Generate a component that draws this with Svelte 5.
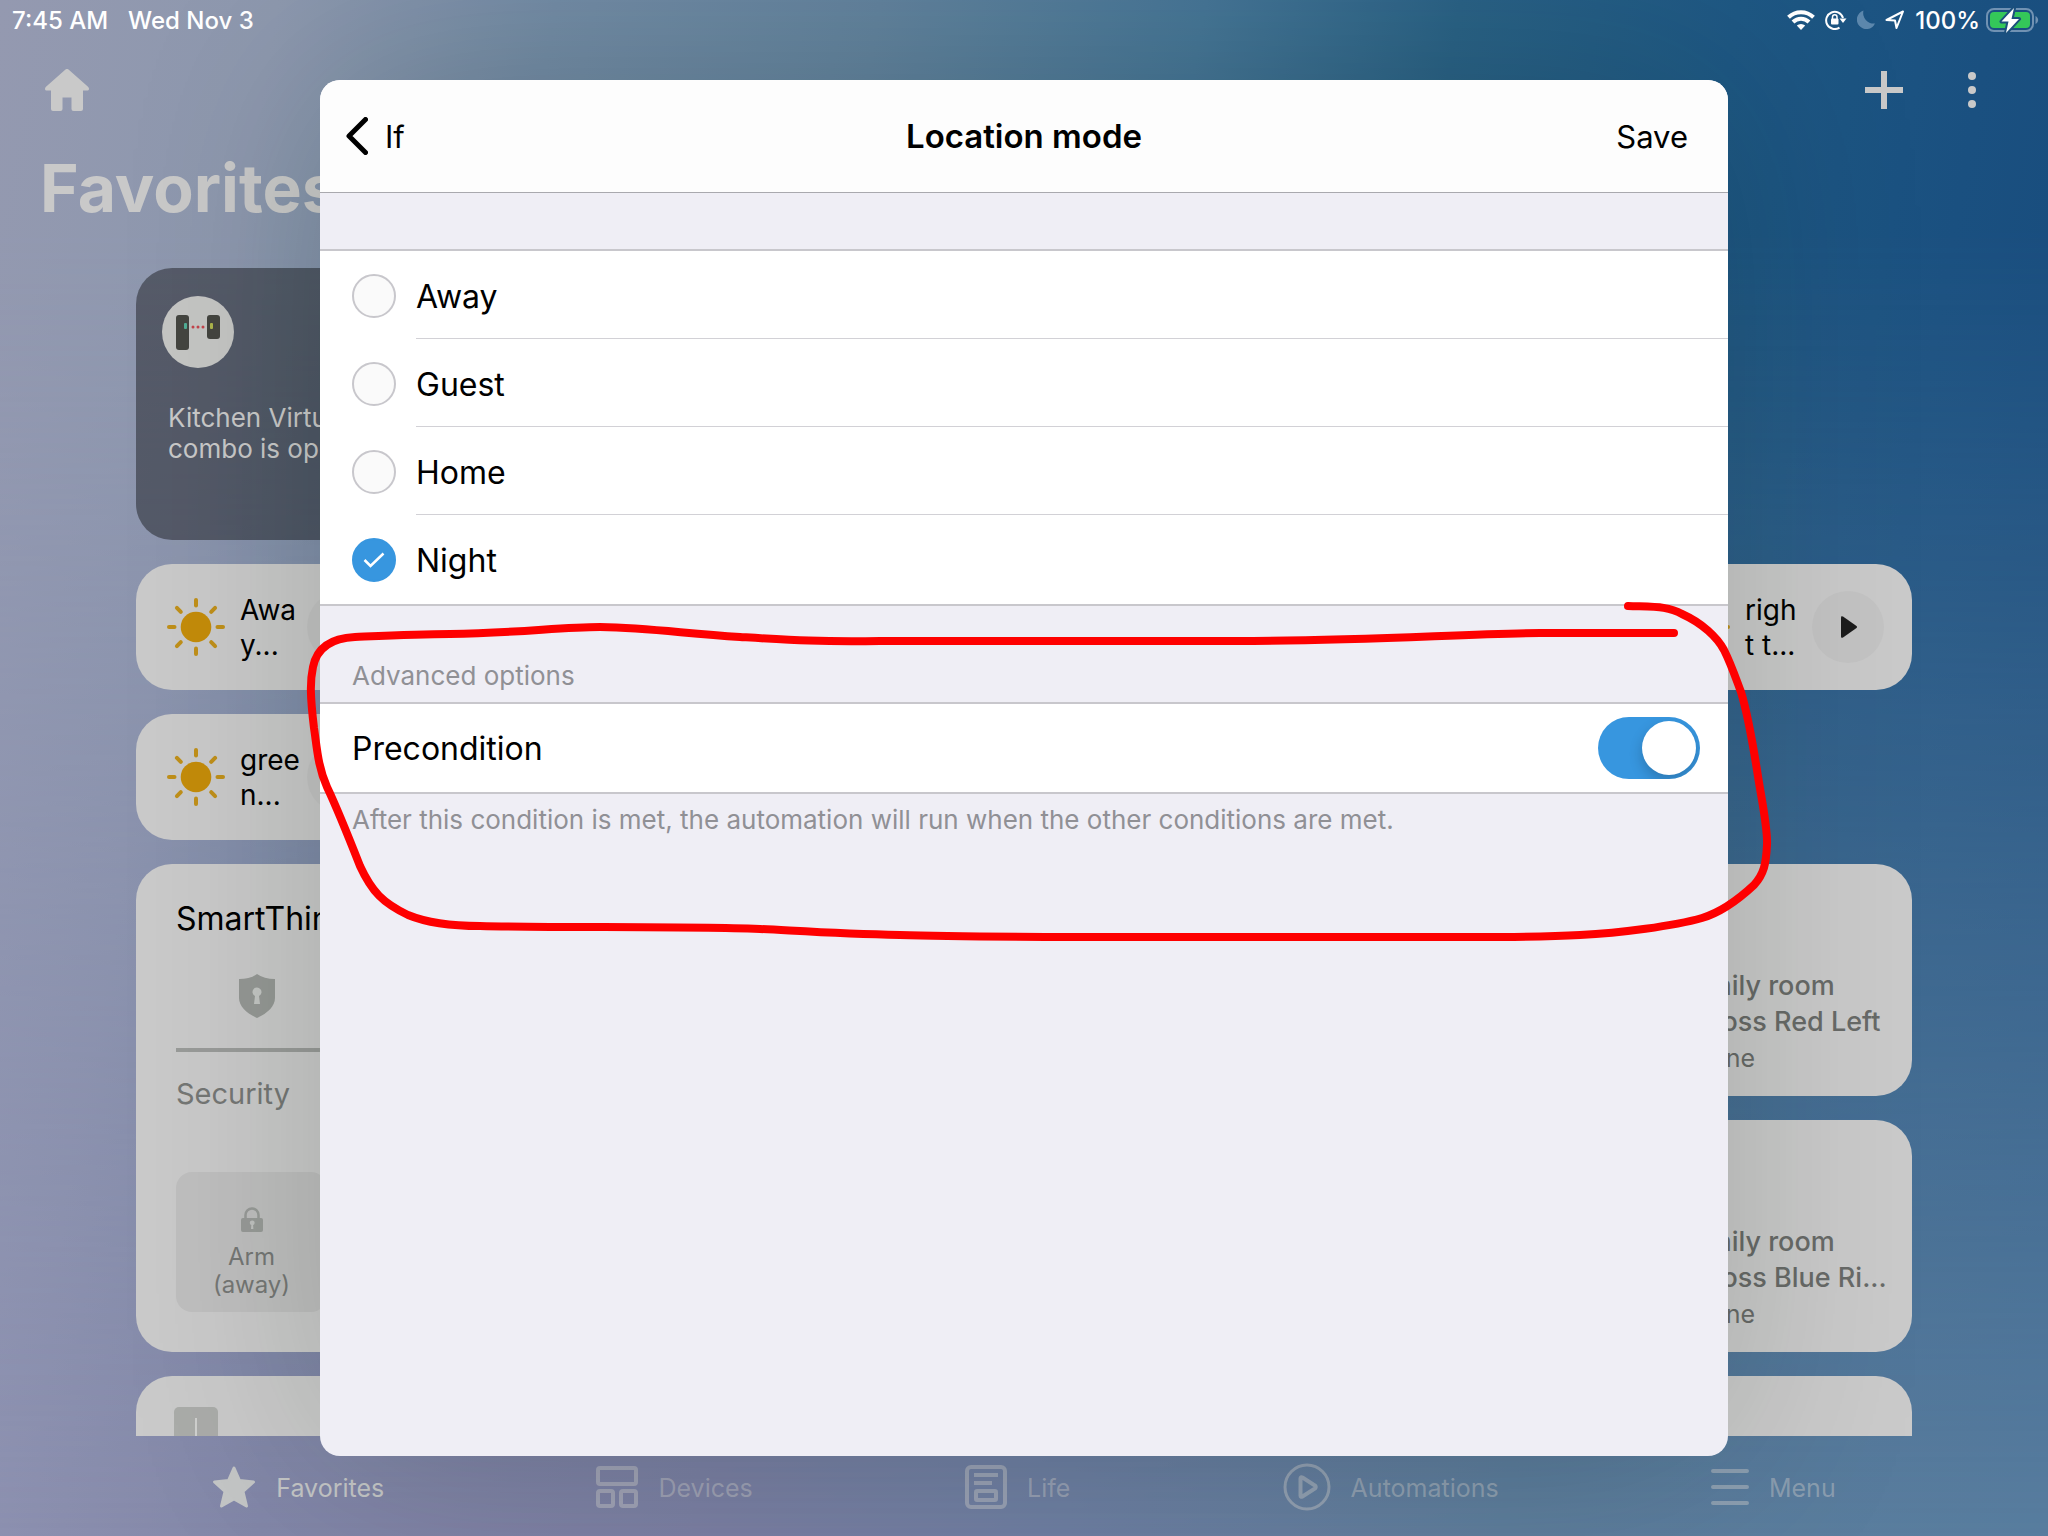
<script lang="ts">
    type Tab = { id: string; label: string };

    const modes = ["Away", "Guest", "Home", "Night"];
    const sceneRows = [
        { name: ["Awa", "y..."], column: "first" },
        { name: ["righ", "t t..."], column: "last" },
        { name: ["gree", "n..."], column: "first" },
    ];
    const devices = ["Across Red Left", "Across Blue Ri..."];
    const tabs: Tab[] = [
        { id: "favorites", label: "Favorites" },
        { id: "devices", label: "Devices" },
        { id: "life", label: "Life" },
        { id: "automations", label: "Automations" },
        { id: "menu", label: "Menu" },
    ];
    const rays = [0, 45, 90, 135, 180, 225, 270, 315];

    let mode = $state("Night");
    let precondition = $state(true);
    let activeTab = $state("favorites");
</script>

<div class="app">
    <div class="status">
        <span>7:45 AM</span>
        <span class="date">Wed Nov 3</span>
        <div class="indicators">
            <svg class="wifi" width="28" height="20" viewBox="0 0 28 20">
                <g fill="none" stroke="#fff" stroke-width="4">
                    <path d="M1.5 7.3a18 18 0 0 1 25 0" />
                    <path d="M6 12a11.5 11.5 0 0 1 16 0" />
                </g>
                <path d="M14 20l-4.2-4.4a6 6 0 0 1 8.400 0z" fill="#fff" />
            </svg>
            <svg class="lock" width="22" height="20" viewBox="0 0 22 20">
                <path d="M14.500 17.600A8.600 8.600 0 1 1 18 8" fill="none" stroke="#fff" stroke-width="2" />
                <path d="M14.500 8.500h7l-3.500 4.500z" fill="#fff" />
                <rect x="6" y="8.500" width="7.500" height="6" rx="1" fill="#fff" />
                <path d="M7.500 9V7a2.200 2.200 0 0 1 4.500 0v2" fill="none" stroke="#fff" stroke-width="1.500" />
            </svg>
            <svg class="moon" width="18" height="20" viewBox="0 0 18 20">
                <path d="M6.500.5a10.500 10.500 0 0 0 11.500 13A9.500 9.500 0 1 1 6.500.5z" fill="#5d88ad" />
            </svg>
            <svg class="arrow" width="20" height="20" viewBox="0 0 20 20">
                <path d="M1.500 10L18 1.500 11.500 18l-1.500-7.500z" fill="none" stroke="#fff" stroke-width="2" stroke-linejoin="round" />
            </svg>
            <span>100%</span>
            <svg class="battery" width="54" height="28" viewBox="0 0 54 28">
                <rect x="1" y="3" width="46" height="22" rx="7" fill="none" stroke="#7192b3" stroke-width="2" />
                <rect x="4" y="6" width="40" height="16" rx="4" fill="#34c759" />
                <path d="M49.500 10c3.500 1.500 3.500 6.500 0 8z" fill="#7192b3" />
                <path d="M28 2L15.500 15.500h7L20 27 33 13h-7.500z" fill="#fff" stroke="#1b4f7c" stroke-width="4" stroke-linejoin="round" paint-order="stroke" />
            </svg>
        </div>
    </div>

    <header class="toolbar">
        <button class="icon" aria-label="Locations">
            <svg width="44" height="42" viewBox="0 0 44 42">
                <path d="M20.200.8a2.600 2.600 0 0 1 3.600 0L43 17.800c1.800 1.800 1 3.700-1 3.700h-4V40q0 2-2 2h-7.500q-2 0-2-2V28.500h-9V40q0 2-2 2H8q-2 0-2-2V21.500H2c-2 0-2.800-1.900-1-3.700z" fill="#c9c9c9" />
            </svg>
        </button>
        <div class="actions">
            <button class="icon" aria-label="Add">
                <svg width="38" height="38" viewBox="0 0 38 38">
                    <path d="M19 0v38M0 19h38" stroke="#c9c9c9" stroke-width="6" />
                </svg>
            </button>
            <button class="icon" aria-label="More options">
                <svg width="8" height="36" viewBox="0 0 8 36" fill="#c9c9c9">
                    <circle cx="4" cy="4" r="4" /><circle cx="4" cy="18" r="4" /><circle cx="4" cy="32" r="4" />
                </svg>
            </button>
        </div>
    </header>

    <h1>Favorites</h1>

    <main class="cards">
        <article class="card sensor">
            <svg width="72" height="72" viewBox="0 0 72 72">
                <circle cx="36" cy="36" r="36" fill="#c5c6c4" />
                <rect x="14" y="19" width="13" height="35" rx="3" fill="#444540" />
                <rect x="45" y="19" width="13" height="24" rx="3" fill="#444540" />
                <rect x="22" y="27" width="3" height="6" rx="1" fill="#4fae94" />
                <rect x="48" y="27" width="3" height="6" rx="1" fill="#adb64b" />
                <g fill="#c4444c">
                    <circle cx="31" cy="31" r="1.500" /><circle cx="36" cy="31" r="1.500" /><circle cx="41" cy="31" r="1.500" />
                </g>
            </svg>
            <p>Kitchen Virtual<br />combo is open</p>
        </article>

        {#each sceneRows as scene}
            <article class="card scene {scene.column}">
                <svg class="sun" width="58" height="58" viewBox="-29 -29 58 58">
                    <circle r="15.300" fill="#c48c0a" />
                    {#each rays as angle}
                        <path d="M0-21.500V-27" transform="rotate({angle})" stroke="#c0901a" stroke-width="4" stroke-linecap="round" />
                    {/each}
                </svg>
                <p>{scene.name[0]}<br />{scene.name[1]}</p>
                <button class="play" aria-label="Run scene">
                    <svg width="16" height="22" viewBox="0 0 16 22">
                        <path d="M0 1.500Q0-.5 2 .6L15.500 10q1 1 0 2L2 21.400Q0 22.500 0 20.500z" fill="#1c1c1c" />
                    </svg>
                </button>
            </article>
        {/each}

        <article class="card monitor">
            <h2>SmartThings Home Monitor</h2>
            <div class="security">
                <svg width="36" height="44" viewBox="0 0 36 44">
                    <path d="M18 0q7 5 18 5v19c0 8-7 15-18 20C7 39 0 32 0 24V5q11 0 18-5z" fill="#959895" />
                    <path d="M15 30l1-8a4.500 4.500 0 1 1 4 0l1 8z" fill="#c4c6c4" />
                </svg>
            </div>
            <p>Security</p>
            <button class="arm">
                <svg width="22" height="26" viewBox="0 0 22 26">
                    <path d="M4.500 12V8a6.500 6.500 0 0 1 13 0v4" fill="none" stroke="#989b98" stroke-width="2.500" />
                    <rect x="0" y="11" width="22" height="14" rx="2" fill="#989b98" />
                    <path d="M10 22l.3-4a2.400 2.400 0 1 1 1.800 0l.3 4z" fill="#c0c2c0" />
                </svg>
                <span>Arm<br />(away)</span>
            </button>
        </article>

        <div class="devices">
            {#each devices as name}
                <article class="card device">
                    <p class="name">Family room</p>
                    <p class="name">{name}</p>
                    <p class="state">Offline</p>
                </article>
            {/each}
        </div>

        <article class="card partial first">
            <svg width="44" height="44" viewBox="0 0 44 44">
                <rect width="44" height="44" rx="5" fill="#aaaca9" />
                <path d="M22 11v24" stroke="#cfd0ce" stroke-width="2" />
            </svg>
        </article>
        <article class="card partial last"></article>
    </main>

    <nav class="tabs">
        {#each tabs as tab}
            <button class="tab" class:active={tab.id === activeTab} onclick={() => (activeTab = tab.id)}>
                {#if tab.id === "favorites"}
                    <svg width="44" height="44" viewBox="0 0 44 44">
                        <path d="M22 3l5.500 12.500 14 1.500-10.500 9.500 3.500 14.500L22 34 9.500 41 13 26.500 2.500 17l14-1.500z" fill="currentColor" stroke="currentColor" stroke-width="3" stroke-linejoin="round" />
                    </svg>
                {:else if tab.id === "devices"}
                    <svg width="42" height="42" viewBox="0 0 42 42" fill="none" stroke="currentColor" stroke-width="4">
                        <rect x="2" y="2" width="38" height="16" rx="2" />
                        <rect x="2" y="25" width="15" height="15" rx="2" />
                        <rect x="25" y="25" width="15" height="15" rx="2" />
                    </svg>
                {:else if tab.id === "life"}
                    <svg width="42" height="44" viewBox="0 0 42 44" fill="none" stroke="currentColor" stroke-width="4">
                        <rect x="2" y="2" width="38" height="40" rx="4" />
                        <path d="M9 10h24M9 18h18" stroke-width="4" />
                        <rect x="11" y="26" width="20" height="9" rx="1" stroke-width="4" />
                    </svg>
                {:else if tab.id === "automations"}
                    <svg width="48" height="48" viewBox="0 0 48 48" fill="none" stroke="currentColor" stroke-width="3">
                        <circle cx="24" cy="24" r="22" />
                        <path d="M17.500 15.500q0-2 2-1L32 22.500q1.500 1.500 0 3L19.500 33.500q-2 1-2-1z" stroke-width="4" />
                    </svg>
                {:else}
                    <svg width="38" height="36" viewBox="0 0 38 36">
                        <path d="M2 2h34M2 18h34M2 34h34" stroke="currentColor" stroke-width="4" stroke-linecap="round" />
                    </svg>
                {/if}
                <span>{tab.label}</span>
            </button>
        {/each}
    </nav>

    <section class="modal" role="dialog" aria-labelledby="modal-title">
        <header class="bar">
            <button class="back">
                <svg width="22" height="38" viewBox="0 0 22 38">
                    <path d="M19.500 2.500L3 19l16.500 16.500" fill="none" stroke="#000" stroke-width="5" stroke-linecap="round" stroke-linejoin="round" />
                </svg>
                <span>If</span>
            </button>
            <h2 id="modal-title">Location mode</h2>
            <button class="save">Save</button>
        </header>

        <div class="group modes" role="radiogroup" aria-labelledby="modal-title">
            {#each modes as item}
                <label class="option">
                    <span class="radio">
                        <input type="radio" name="mode" value={item} bind:group={mode} />
                        {#if mode === item}
                            <svg width="22" height="18" viewBox="0 0 22 18">
                                <path d="M1.500 9l6 6L20.500 2.500" fill="none" stroke="#fff" stroke-width="2.500" />
                            </svg>
                        {/if}
                    </span>
                    <span class="text">{item}</span>
                </label>
            {/each}
        </div>

        <h3>Advanced options</h3>
        <label class="group precondition">
            <span>Precondition</span>
            <input type="checkbox" role="switch" bind:checked={precondition} />
        </label>
        <p class="hint">After this condition is met, the automation will run when the other conditions are met.</p>
    </section>

    <!-- hand-drawn marker round the advanced options -->
    <svg class="marker" viewBox="0 0 2048 1536" preserveAspectRatio="none">
        <path
            d="M1628 606C1655 607 1668 606 1682 614C1702 623 1717 637 1724 650C1731 664 1735 676 1741 692C1748 715 1753 745 1757 770C1761 797 1768 828 1767 845C1766 864 1764 874 1754 885C1739 899 1722 912 1702 918C1674 926 1620 933 1580 935C1530 938 1480 937 1420 937L1150 937C1050 937 960 937 900 935C840 934 800 931 760 929C680 926 560 928 480 926C450 926 425 922 408 915C383 903 372 892 360 866C349 838 337 808 327 787C318 767 317 748 314 728C310 695 310 681 313 667C317 647 332 638 355 637C400 635 420 634 450 634C520 633 560 627 600 627C650 628 680 633 740 637C790 640 820 642 880 641L1220 641C1340 642 1460 634 1540 633L1674 633"
        />
    </svg>
</div>

<style>
    :global(body) {
        background: #8087a5;
    }

    .app {
        position: relative;
        isolation: isolate;
        display: flex;
        flex-direction: column;
        height: 100vh;
        overflow: hidden;
        font-family: Inter, "Liberation Sans", sans-serif;
        color: #000;
        background: linear-gradient(95deg, #9195b4 0%, #8387a8 18%, #7c7fa4 38%, #6f7fa3 55%, #5f7e9d 75%, #587d9f 100%);
    }

    .app::before {
        content: "";
        position: absolute;
        inset: 0;
        z-index: -1;
        background: linear-gradient(100deg, #9499b0 0%, #8d98ae 12%, #738ca6 24%, #62839e 38%, #467697 52%, #2a6286 63%, #1e5884 75%, #1a5080 86%, #17497a 100%);
        mask-image: linear-gradient(#000 15%, transparent);
    }

    button {
        padding: 0;
        border: 0;
        background: none;
        font: inherit;
        color: inherit;
        cursor: pointer;
    }

    h1,
    h2,
    h3,
    p {
        margin: 0;
        font-weight: 400;
    }

    svg {
        display: block;
        flex: none;
    }

    .status {
        display: flex;
        align-items: center;
        height: 40px;
        padding: 0 8px 0 12px;
        font-size: 24px;
        font-weight: 500;
        color: #fff;
    }

    .date {
        margin-left: 20px;
    }

    .indicators {
        display: flex;
        align-items: center;
        gap: 10px;
        margin-left: auto;
    }

    .battery {
        margin-left: -4px;
    }

    .toolbar {
        display: flex;
        align-items: center;
        justify-content: space-between;
        height: 100px;
        padding: 0 72px 0 45px;
    }

    .actions {
        display: flex;
        align-items: center;
        gap: 65px;
    }

    h1 {
        padding: 0 40px;
        font-size: 66px;
        line-height: 96px;
        font-weight: 700;
        color: #c9c9c9;
    }

    .cards {
        flex: 1;
        min-height: 0;
        overflow: hidden;
        display: grid;
        grid-template-columns: repeat(6, 1fr);
        grid-template-rows: 272px 126px 126px 488px 126px;
        gap: 24px 30px;
        padding: 32px 136px 0;
    }

    .card {
        border-radius: 36px;
        background: #cacaca;
    }

    .first {
        grid-column: 1;
    }

    .last {
        grid-column: 6;
    }

    .sensor {
        grid-column: 1 / span 2;
        padding: 28px 26px;
        background: rgba(0, 0, 0, 0.4);
        color: #c9c9c9;
        font-size: 26px;
        line-height: 31px;
    }

    .sensor p {
        padding: 34px 6px 0;
    }

    .scene {
        display: flex;
        align-items: center;
        padding: 0 28px 0 31px;
        font-size: 28px;
        line-height: 35px;
    }

    .scene p {
        flex: 1;
        padding-top: 2px;
        margin-left: 15px;
        white-space: nowrap;
    }

    .play {
        display: grid;
        place-items: center;
        width: 72px;
        height: 72px;
        padding-left: 2px;
        border-radius: 50%;
        background: #c4c4c4;
    }

    .monitor {
        grid-column: 1 / span 2;
        padding: 32px 40px;
        font-size: 29px;
        color: #757775;
    }

    .monitor h2 {
        font-size: 32px;
        line-height: 46px;
        color: #000;
        white-space: nowrap;
    }

    .security {
        height: 74px;
        padding: 32px 63px 0;
        border-bottom: 4px solid #999b99;
    }

    .monitor p {
        line-height: 84px;
    }

    .arm {
        display: flex;
        flex-direction: column;
        align-items: center;
        gap: 10px;
        width: 151px;
        height: 140px;
        margin-top: 36px;
        padding-top: 35px;
        border-radius: 16px;
        background: #bfbfbf;
        font-size: 24px;
        line-height: 28px;
        color: #757775;
    }

    .devices {
        grid-column: 6;
        display: grid;
        grid-template-rows: 1fr 1fr;
        gap: 24px;
        min-width: 0;
    }

    .device {
        display: flex;
        flex-direction: column;
        justify-content: flex-end;
        padding: 0 0 20px 36px;
        font-size: 25px;
        line-height: 36px;
        color: #686a68;
        white-space: nowrap;
    }

    .device .name {
        font-size: 27px;
        font-weight: 500;
    }

    .partial {
        padding: 31px 38px;
    }

    .tabs {
        display: flex;
        align-items: center;
        justify-content: space-evenly;
        height: 100px;
        padding-top: 2px;
        box-sizing: border-box;
        font-size: 25px;
    }

    .tab {
        display: flex;
        align-items: center;
        gap: 20px;
        color: rgba(201, 201, 201, 0.45);
    }

    .tab span {
        padding-top: 2px;
    }

    .tab.active {
        color: #c4c6c6;
    }

    .modal {
        position: absolute;
        inset: 80px 320px;
        overflow: hidden;
        border-radius: 20px;
        background: #efeef5;
        box-shadow: 0 0 200px rgba(0, 20, 0, 0.18);
        font-size: 32px;
    }

    .bar {
        display: grid;
        grid-template-columns: 1fr auto 1fr;
        align-items: center;
        height: 112px;
        padding: 0 40px 0 26px;
        border-bottom: 1px solid #a9a9ae;
        background: #fdfdfd;
    }

    .bar h2 {
        margin-left: 14px;
        font-size: 33px;
        font-weight: 600;
    }

    .back {
        display: flex;
        align-items: center;
        gap: 17px;
        justify-self: start;
        font-size: 31px;
    }

    .save {
        justify-self: end;
        font-size: 31px;
    }

    .group {
        border: solid #c8c7cc;
        border-width: 2px 0;
        background: #fff;
    }

    .modes {
        margin-top: 56px;
        padding-bottom: 1px;
    }

    .option {
        display: flex;
        align-items: center;
        height: 88px;
        padding-left: 32px;
    }

    .radio {
        display: grid;
        place-items: center;
        width: 44px;
        height: 44px;
        margin: 2px 20px 0 0;
    }

    .radio > :global(*) {
        grid-area: 1 / 1;
    }

    .radio input {
        appearance: none;
        width: 44px;
        height: 44px;
        margin: 0;
        border: 2px solid #c8c7cc;
        border-radius: 50%;
        background: #fafafa;
    }

    .radio input:checked {
        border-color: #3796df;
        background: #3796df;
    }

    .radio svg {
        z-index: 1;
    }

    .text {
        flex: 1;
        padding-top: 5px;
        line-height: 82px;
        border-bottom: 1px solid #d2d1d6;
    }

    .option:last-child .text {
        border-color: transparent;
    }

    h3,
    .hint {
        padding: 0 32px;
        font-size: 26px;
        line-height: 52px;
        color: #909095;
    }

    h3 {
        padding-top: 44px;
    }

    .precondition {
        display: flex;
        align-items: center;
        justify-content: space-between;
        height: 88px;
        padding: 0 28px 0 32px;
    }

    .precondition input {
        appearance: none;
        width: 102px;
        height: 62px;
        margin: 0;
        padding: 4px;
        border-radius: 31px;
        background: #d5d5da;
        overflow: hidden;
    }

    .precondition input::before {
        content: "";
        display: block;
        width: 54px;
        height: 54px;
        border-radius: 50%;
        background: #fff;
        box-shadow: 0 6px 14px rgba(0, 0, 0, 0.2);
    }

    .precondition input:checked {
        background: #3796df;
    }

    .precondition input:checked::before {
        margin-left: auto;
    }

    .marker {
        position: absolute;
        inset: 0;
        width: 100%;
        height: 100%;
        pointer-events: none;
        fill: none;
        stroke: #fe0000;
        stroke-width: 8px;
        stroke-linecap: round;
        stroke-linejoin: round;
    }
</style>
